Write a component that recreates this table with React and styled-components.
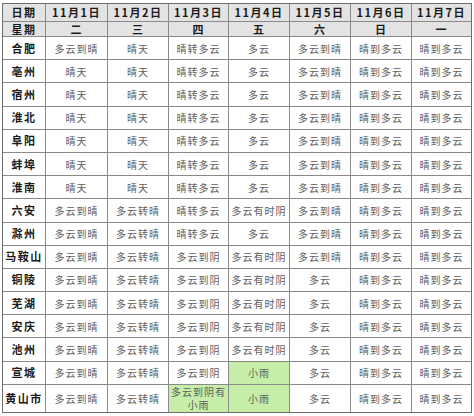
import React from "react";
import styled, { createGlobalStyle } from "styled-components";

const Global = createGlobalStyle`
  html, body { margin: 0; padding: 0; background: #ffffff; }
  body { font-family: "Noto Sans CJK SC", "Noto Sans", sans-serif; }
`;

const Page = styled.div`
  padding: 3px 0 0 2px;
`;

const Grid = styled.div`
  display: grid;
  width: max-content;
  grid-template-columns: 42px 61px 60px 59px 60px 60px 60px 59px;
  grid-template-rows: 17px 14px repeat(15, 22.2px) 27px;
  gap: 1px;
  background: #8a8a8a;
  border: 1px solid #6e6e6e;
`;

const Cell = styled.div`
  display: flex;
  align-items: center;
  justify-content: center;
  text-align: center;
  background: ${(p) => (p.$rain ? "#c6eea8" : p.$head ? "#e3e3e3" : "#ffffff")};
  color: ${(p) => (p.$bold ? "#1a1a1a" : "#5e5e5e")};
  font-weight: ${(p) => (p.$bold ? 700 : 400)};
  font-size: ${(p) => (p.$bold ? "11px" : "10px")};
  letter-spacing: ${(p) => (p.$wide ? "1.5px" : p.$bold ? "0.8px" : "1px")};
  line-height: 13px;
  white-space: pre-line;
  overflow: hidden;
`;

const days = ["11月1日", "11月2日", "11月3日", "11月4日", "11月5日", "11月6日", "11月7日"];
const weeks = ["二", "三", "四", "五", "六", "日", "一"];

const A = "晴转多云";
const C = "晴到多云";
const rows = [
  ["合肥", "多云到晴", "晴天", A, "多云", "多云到晴", C, C],
  ["亳州", "晴天", "晴天", A, "多云", "多云到晴", C, C],
  ["宿州", "晴天", "晴天", A, "多云", "多云到晴", C, C],
  ["淮北", "晴天", "晴天", A, "多云", "多云到晴", C, C],
  ["阜阳", "晴天", "晴天", A, "多云", "多云到晴", C, C],
  ["蚌埠", "晴天", "晴天", A, "多云", "多云到晴", C, C],
  ["淮南", "晴天", "晴天", A, "多云", "多云到晴", C, C],
  ["六安", "多云到晴", "多云转晴", A, "多云有时阴", "多云到晴", C, C],
  ["滁州", "多云到晴", "多云转晴", A, "多云", "多云到晴", C, C],
  ["马鞍山", "多云到晴", "多云转晴", "多云到阴", "多云有时阴", "多云到晴", C, C],
  ["铜陵", "多云到晴", "多云转晴", "多云到阴", "多云有时阴", "多云", C, C],
  ["芜湖", "多云到晴", "多云转晴", "多云到阴", "多云有时阴", "多云", C, C],
  ["安庆", "多云到晴", "多云转晴", "多云到阴", "多云有时阴", "多云", C, C],
  ["池州", "多云到晴", "多云转晴", "多云到阴", "多云有时阴", "多云", C, C],
  ["宣城", "多云到晴", "多云转晴", "多云到阴", "小雨", "多云", C, C],
  ["黄山市", "多云到晴", "多云转晴", "多云到阴有\n小雨", "小雨", "多云", C, C],
];

const isRain = (t) => t.includes("雨");

export default function App() {
  return (
    <>
      <Global />
      <Page>
        <Grid>
          <Cell $head $bold $wide>日期</Cell>
          {days.map((d) => (
            <Cell key={d} $head $bold $wide>{d}</Cell>
          ))}
          <Cell $head $bold $wide>星期</Cell>
          {weeks.map((w) => (
            <Cell key={w} $head $bold>{w}</Cell>
          ))}
          {rows.map((r) =>
            r.map((t, i) =>
              i === 0 ? (
                <Cell key={r[0] + i} $bold $wide>{t}</Cell>
              ) : (
                <Cell key={r[0] + i} $rain={isRain(t)}>{t}</Cell>
              )
            )
          )}
        </Grid>
      </Page>
    </>
  );
}
